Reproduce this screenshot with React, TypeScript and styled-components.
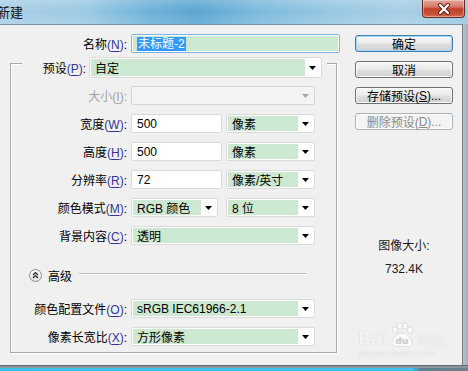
import React from 'react';
import styled, { createGlobalStyle } from 'styled-components';

const GlobalStyle = createGlobalStyle`
  html, body { margin: 0; padding: 0; }
  body {
    width: 468px;
    height: 371px;
    overflow: hidden;
    background: #3cbbe6;
    font-family: "Liberation Sans", "Noto Sans CJK SC", sans-serif;
    font-size: 12px;
    color: #000;
  }
`;

const Window = styled.div`
  position: relative;
  width: 468px;
  height: 371px;
  display: flex;
  flex-direction: column;
  overflow: hidden;
`;

const TitleBar = styled.div`
  height: 24px;
  flex: none;
  display: flex;
  align-items: flex-start;
  background:
    linear-gradient(180deg, rgba(255,255,255,0.18) 0%, rgba(255,255,255,0) 45%, rgba(255,255,255,0.12) 100%),
    linear-gradient(90deg, #a9cfe6 0%, #9ccae4 18%, #6fb2d8 32%, #5ba6d0 42%, #7dbadc 55%, #96c7e2 70%, #a6cfe6 85%, #9bc8e2 100%);
`;

const Title = styled.div`
  margin-left: -3px;
  line-height: 24px;
  font-family: "Noto Sans CJK SC", sans-serif;
  font-size: 13px;
  color: #111;
`;

const CloseButton = styled.div`
  margin-left: auto;
  margin-right: 3px;
  width: 43px;
  height: 18px;
  box-sizing: border-box;
  border: 1px solid #6a2b22;
  border-top: none;
  border-radius: 0 0 4px 4px;
  background: linear-gradient(180deg, #e6a69b 0%, #d77a68 40%, #c2412b 52%, #c64f36 80%, #d56c52 100%);
  box-shadow: inset 0 0 0 1px rgba(255,255,255,0.35);
  display: flex;
  align-items: center;
  justify-content: center;
`;

const Middle = styled.div`
  flex: none;
  height: 341px;
  display: flex;
`;

const Client = styled.div`
  position: relative;
  width: 463px;
  box-sizing: border-box;
  border-top: 1px solid #7f8f9c;
  border-right: 1px solid #6f7d88;
  background: #f0f0f0;
  display: flex;
`;

const RightFrame = styled.div`
  flex: 1;
  background: linear-gradient(90deg, #b6c3cc, #a3b0ba);
`;

const BottomEdge = styled.div`
  height: 2px;
  flex: none;
  background: #8a959e;
  border-top: 1px solid #5f6b75;
`;

const Desktop = styled.div`
  flex: 1;
  background: linear-gradient(90deg, #39bfe9 0%, #3dc2ea 88%, #5c7f93 90%, #6f7f8a 100%);
`;

const FormCol = styled.div`
  width: 345px;
  padding-top: 9px;
  display: flex;
  flex-direction: column;
`;

const NameRow = styled.div`
  display: flex;
  align-items: center;
  height: 19px;
`;

const Label = styled.div<{ $w: number; $off?: boolean }>`
  width: ${p => p.$w}px;
  flex: none;
  margin-right: 4px;
  text-align: right;
  white-space: nowrap;
  font-size: 12px;
  color: ${p => (p.$off ? '#a3a3a3' : '#000')};
`;

const Key = styled.span<{ $off?: boolean }>`
  color: ${p => (p.$off ? '#a3a3a3' : '#34349a')};
  u { text-underline-offset: 2px; }
`;

const GroupBox = styled.div`
  margin-top: 10px;
  margin-left: 10px;
  width: 327px;
  box-sizing: border-box;
  border: 1px solid #a9a9a9;
  box-shadow: 1px 1px 0 #fff, inset 1px 1px 0 #fff;
  padding-bottom: 6px;
  display: flex;
  flex-direction: column;
`;

const PresetRow = styled.div`
  margin-top: -7px;
  margin-left: 11px;
  width: 305px;
  height: 21px;
  background: #f0f0f0;
  display: flex;
  align-items: center;
`;

const Row = styled.div<{ $top?: number }>`
  margin-top: ${p => p.$top ?? 9}px;
  height: 19px;
  display: flex;
  align-items: center;
`;

const Field = styled.div<{ $w: number; $h?: number; $focus?: boolean; $off?: boolean; $gap?: number }>`
  box-sizing: border-box;
  width: ${p => p.$w}px;
  height: ${p => p.$h ?? 19}px;
  margin-left: ${p => p.$gap ?? 0}px;
  flex: none;
  display: flex;
  border: 1px solid ${p => (p.$focus ? '#7db3e8' : p.$off ? '#d6d6d6' : '#dadada')};
  border-radius: 2px;
  background: ${p => (p.$off ? '#f3f3f3' : '#fff')};
  padding: 1px;
`;

const Fill = styled.div<{ $tone: 'green' | 'white' | 'off' }>`
  flex: 1;
  min-width: 0;
  display: flex;
  align-items: center;
  padding-left: 4px;
  background: ${p => (p.$tone === 'green' ? '#cde8d0' : p.$tone === 'off' ? '#f3f3f3' : '#fff')};
  font-size: 12px;
  white-space: nowrap;
  overflow: hidden;
`;

const Selected = styled.span`
  background: #3399ff;
  color: #fff;
  padding: 0 1px;
  line-height: 14px;
`;

const ArrowBox = styled.div`
  width: 15px;
  flex: none;
  display: flex;
  align-items: center;
  justify-content: center;
  padding-top: 1px;
`;

const AdvancedRow = styled.div`
  margin-top: 23px;
  height: 15px;
  padding-left: 18px;
  margin-right: 30px;
  display: flex;
  align-items: center;
`;

const AdvancedText = styled.span`
  margin-left: 6px;
  margin-right: 7px;
  font-size: 12px;
`;

const Rule = styled.div`
  flex: 1;
  height: 1px;
  margin-top: -4px;
  background: #b9b9b9;
  box-shadow: 0 1px 0 #fff;
`;

const SideCol = styled.div`
  margin-left: 10px;
  width: 98px;
  padding-top: 10px;
  display: flex;
  flex-direction: column;
`;

const Button = styled.div<{ $primary?: boolean; $off?: boolean }>`
  height: 17px;
  margin-bottom: 9px;
  box-sizing: border-box;
  border: 1px solid ${p => (p.$primary ? '#3c7fb1' : p.$off ? '#adb2b5' : '#707070')};
  border-radius: 3px;
  background: ${p =>
    p.$off
      ? '#f4f4f4'
      : 'linear-gradient(180deg, #f6f6f6 0%, #ececec 48%, #dedede 52%, #d2d2d2 100%)'};
  box-shadow: ${p => (p.$primary ? 'inset 0 0 0 1px #9fd8f5' : 'inset 0 0 0 1px #fcfcfc')};
  display: flex;
  align-items: center;
  justify-content: center;
  font-size: 12px;
  color: ${p => (p.$off ? '#8a8a8a' : '#000')};
  white-space: nowrap;
`;

const InfoLine = styled.div<{ $top: number }>`
  margin-top: ${p => p.$top}px;
  line-height: 16px;
  text-align: center;
  font-size: 12px;
  color: #1a1a1a;
`;

const Watermark = styled.div`
  position: absolute;
  left: 358px;
  top: 297px;
  width: 90px;
  color: rgba(255, 255, 255, 0.75);
  text-shadow: 0 0 1px rgba(150, 150, 150, 0.45);
  pointer-events: none;
`;

const MarkTop = styled.div`
  display: flex;
  align-items: flex-end;
  height: 26px;
  font-family: "DejaVu Sans", sans-serif;
  font-size: 17px;
  font-weight: bold;
  line-height: 18px;
`;

const MarkCn = styled.span`
  font-family: "Noto Sans CJK SC", sans-serif;
  font-size: 14px;
  font-weight: normal;
  margin-left: 1px;
`;

const MarkUrl = styled.div`
  font-family: "DejaVu Sans", sans-serif;
  font-size: 8px;
  line-height: 11px;
  letter-spacing: 0.2px;
`;

const Arrow = ({ off }: { off?: boolean }) => (
  <ArrowBox>
    <svg width="7" height="4" viewBox="0 0 7 4">
      <polygon points="0,0 7,0 3.5,4" fill={off ? '#a5a5a5' : '#000'} />
    </svg>
  </ArrowBox>
);

const Caption = ({ text, k, off }: { text: string; k: string; off?: boolean }) => (
  <>
    {text}
    <Key $off={off}>
      (<u>{k}</u>)
    </Key>
    :
  </>
);

const Select = ({ w, value, off, h, gap }: { w: number; value?: string; off?: boolean; h?: number; gap?: number }) => (
  <Field $w={w} $off={off} $h={h} $gap={gap}>
    <Fill $tone={off ? 'off' : 'green'}>{value}</Fill>
    <Arrow off={off} />
  </Field>
);

const TextBox = ({ w, value }: { w: number; value: string }) => (
  <Field $w={w}>
    <Fill $tone="white">{value}</Fill>
  </Field>
);

const CollapseIcon = () => (
  <svg width="13" height="13" viewBox="0 0 13 13">
    <defs>
      <linearGradient id="cg" x1="0" y1="0" x2="0" y2="1">
        <stop offset="0" stopColor="#ffffff" />
        <stop offset="1" stopColor="#e2e2e2" />
      </linearGradient>
    </defs>
    <circle cx="6.5" cy="6.5" r="6" fill="url(#cg)" stroke="#8d8d8d" />
    <path d="M4 6 L6.5 3.6 L9 6 M4 9 L6.5 6.6 L9 9" fill="none" stroke="#222" strokeWidth="1.2" />
  </svg>
);

const CloseGlyph = () => (
  <svg width="14" height="12" viewBox="0 0 14 12">
    <path d="M3 2 L11 10 M11 2 L3 10" stroke="#5a1d14" strokeWidth="4" strokeLinecap="round" />
    <path d="M3 2 L11 10 M11 2 L3 10" stroke="#fff" strokeWidth="2.2" strokeLinecap="round" />
  </svg>
);

const Paw = () => (
  <svg width="26" height="26" viewBox="0 0 26 26" style={{ margin: '0 1px' }}>
    <g fill="rgba(255,255,255,0.75)" stroke="rgba(160,160,160,0.45)" strokeWidth="0.6">
      <ellipse cx="6" cy="8" rx="2.6" ry="3.2" />
      <ellipse cx="11" cy="4" rx="2.6" ry="3.2" />
      <ellipse cx="16" cy="4" rx="2.6" ry="3.2" />
      <ellipse cx="21" cy="8" rx="2.6" ry="3.2" />
      <path d="M13 11 C8 11 3 17 3 21 C3 25 8 25 13 24 C18 25 23 25 23 21 C23 17 18 11 13 11 Z" />
    </g>
    <text x="13" y="22" textAnchor="middle" fontSize="9" fontFamily="DejaVu Sans, sans-serif" fontWeight="bold" fill="#d0d0d0">
      du
    </text>
  </svg>
);

export default function App() {
  return (
    <>
      <GlobalStyle />
      <Window>
        <TitleBar>
          <Title>新建</Title>
          <CloseButton>
            <CloseGlyph />
          </CloseButton>
        </TitleBar>
        <Middle>
          <Client>
            <FormCol>
              <NameRow>
                <Label $w={127}>
                  <Caption text="名称" k="N" />
                </Label>
                <Field $w={209} $focus>
                  <Fill $tone="green">
                    <Selected>未标题-2</Selected>
                  </Fill>
                </Field>
              </NameRow>

              <GroupBox>
                <PresetRow>
                  <Label $w={64} style={{ marginRight: 3 }}>
                    <Caption text="预设" k="P" />
                  </Label>
                  <Select w={233} h={21} value="自定" />
                </PresetRow>

                <Row $top={8}>
                  <Label $w={116} $off>
                    <Caption text="大小" k="I" off />
                  </Label>
                  <Select w={184} off />
                </Row>
                <Row>
                  <Label $w={116}>
                    <Caption text="宽度" k="W" />
                  </Label>
                  <TextBox w={91} value="500" />
                  <Select w={89} gap={4} value="像素" />
                </Row>
                <Row>
                  <Label $w={116}>
                    <Caption text="高度" k="H" />
                  </Label>
                  <TextBox w={91} value="500" />
                  <Select w={89} gap={4} value="像素" />
                </Row>
                <Row>
                  <Label $w={116}>
                    <Caption text="分辨率" k="R" />
                  </Label>
                  <TextBox w={91} value="72" />
                  <Select w={89} gap={4} value="像素/英寸" />
                </Row>
                <Row>
                  <Label $w={116}>
                    <Caption text="颜色模式" k="M" />
                  </Label>
                  <Select w={87} value="RGB 颜色" />
                  <Select w={89} gap={8} value="8 位" />
                </Row>
                <Row>
                  <Label $w={116}>
                    <Caption text="背景内容" k="C" />
                  </Label>
                  <Select w={184} value="透明" />
                </Row>

                <AdvancedRow>
                  <CollapseIcon />
                  <AdvancedText>高级</AdvancedText>
                  <Rule />
                </AdvancedRow>

                <Row $top={16}>
                  <Label $w={116}>
                    <Caption text="颜色配置文件" k="O" />
                  </Label>
                  <Select w={184} value="sRGB IEC61966-2.1" />
                </Row>
                <Row>
                  <Label $w={116}>
                    <Caption text="像素长宽比" k="X" />
                  </Label>
                  <Select w={184} value="方形像素" />
                </Row>
              </GroupBox>
            </FormCol>

            <SideCol>
              <Button $primary>确定</Button>
              <Button>取消</Button>
              <Button>
                存储预设(<u>S</u>)...
              </Button>
              <Button $off>
                删除预设(<u>D</u>)...
              </Button>
              <InfoLine $top={99}>图像大小:</InfoLine>
              <InfoLine $top={7}>732.4K</InfoLine>
            </SideCol>

            <Watermark>
              <MarkTop>
                Bai
                <Paw />
                <MarkCn>经验</MarkCn>
              </MarkTop>
              <MarkUrl>jingyan.baidu.com</MarkUrl>
            </Watermark>
          </Client>
          <RightFrame />
        </Middle>
        <BottomEdge />
        <Desktop />
      </Window>
    </>
  );
}
